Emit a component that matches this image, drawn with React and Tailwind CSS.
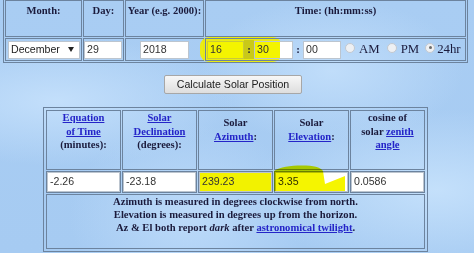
import React from "react";

const Radio = ({ checked }) => (
  <span className="relative inline-block w-[10px] h-[10px] rounded-full border border-[#c3c8cf] bg-[#eef0f3] shrink-0">
    {checked && (
      <span className="absolute left-[2.5px] top-[2.5px] w-[3px] h-[3px] rounded-full bg-[#6b6b6b]" />
    )}
  </span>
);

const Box = ({ className = "", children }) => (
  <div
    className={
      "h-[18px] border border-[#bcc5cf] flex items-center pl-[2px] font-['Liberation_Sans',Arial,sans-serif] text-[10.6px] text-[#333] " +
      className
    }
  >
    {children}
  </div>
);

const Link = ({ children }) => (
  <span className="text-[#2424c8] underline">{children}</span>
);

export default function App() {
  const hdr =
    "border border-[#6c839e] text-center font-bold text-[10.6px] leading-[13px] text-[#1b1b3c]";
  const hdr2 =
    "border border-[#6c839e] text-center font-bold text-[10.6px] leading-[13.5px] text-[#1b1b3c]";
  return (
    <div className="relative w-[474px] h-[253px] overflow-hidden font-['Liberation_Serif',serif] bg-[radial-gradient(ellipse_at_12%_40%,#c3dffb,transparent_30%),radial-gradient(ellipse_at_70%_28%,#c0ddfa,transparent_28%),radial-gradient(ellipse_at_92%_75%,#c4e0fb,transparent_30%),radial-gradient(ellipse_at_40%_85%,#bcdaf9,transparent_30%),linear-gradient(#a9cdf3,#a6cbf2)]">
      {/* Highlighter behind the time inputs */}
      <div className="absolute left-[200px] top-[37px] w-[82px] h-[25px] rounded-[9px] bg-[#eeee06] opacity-95" />

      {/* Top table */}
      <div className="ml-[3px] mt-[-2px] w-[465px] border border-[#6c839e] p-[1px] grid grid-cols-[77px_41px_79px_261px] grid-rows-[37px_23px] gap-[1px]">
        <div className={hdr + " pt-[3px]"}>Month:</div>
        <div className={hdr + " pt-[3px]"}>Day:</div>
        <div className={hdr + " pt-[3px]"}>Year (e.g. 2000):</div>
        <div className={hdr + " pt-[3px]"}>Time: (hh:mm:ss)</div>

        <div className="border border-[#6c839e] flex items-center pl-[2px]">
          <div className="w-[72px] h-[18px] bg-white border border-[#bcc5cf] flex items-center justify-between pl-[2px] pr-[5px] font-['Liberation_Sans',Arial,sans-serif] text-[10.6px] text-[#222]">
            <span>December</span>
            <svg width="6" height="5" viewBox="0 0 6 5">
              <path d="M0 0 L6 0 L3 5 Z" fill="#222" />
            </svg>
          </div>
        </div>
        <div className="border border-[#6c839e] flex items-center">
          <Box className="w-[38px] bg-white">29</Box>
        </div>
        <div className="border border-[#6c839e] flex items-center justify-center">
          <Box className="w-[49px] bg-white">2018</Box>
        </div>
        <div className="relative border border-[#6c839e] flex items-center pl-[1px] text-[12.8px] text-[#1b1b3c]">
          <Box className="relative w-[37px] bg-[#f4f400] border-[#c9c93a]">16</Box>
          <span className="relative w-[10px] h-[19px] flex items-center justify-center font-bold text-[11px] bg-[#c9c918]">:</span>
          <Box className="relative w-[39px] bg-[linear-gradient(to_right,#f4f400_25px,#ffffff_25px)]">30</Box>
          <span className="w-[10px] text-center font-bold text-[11px]">:</span>
          <Box className="w-[38px] bg-white">00</Box>
          <span className="ml-[4px]"><Radio /></span>
          <span className="ml-[4px]">AM</span>
          <span className="ml-[7px]"><Radio /></span>
          <span className="ml-[4px]">PM</span>
          <span className="ml-[6px]"><Radio checked /></span>
          <span className="ml-[2px]">24hr</span>
        </div>
      </div>

      {/* Button */}
      <div className="mt-[12px] ml-[164px] w-[138px] h-[19px] border border-[#a7a7a7] rounded-[2px] bg-[linear-gradient(#f7f7f7,#dedede)] flex items-center justify-center font-['Liberation_Sans',Arial,sans-serif] text-[10.6px] text-[#222]">
        Calculate Solar Position
      </div>

      {/* Bottom table */}
      <div className="mt-[13px] ml-[43px] w-[385px] border border-[#6c839e] p-[2px] grid grid-cols-[repeat(5,75px)] grid-rows-[60px_22px_55px] gap-[1px]">
        <div className={hdr2}>
          <Link>Equation </Link>
          <br />
          <Link>of Time</Link>
          <br />
          (minutes):
        </div>
        <div className={hdr2}>
          <Link>Solar</Link>
          <br />
          <Link>Declination</Link>
          <br />
          (degrees):
        </div>
        <div className={hdr2 + " pt-[5px]"}>
          Solar
          <br />
          <Link>Azimuth</Link>:
        </div>
        <div className={hdr2 + " pt-[5px]"}>
          Solar
          <br />
          <Link>Elevation</Link>:
        </div>
        <div className={hdr2}>
          cosine of
          <br />
          solar <Link>zenith</Link>
          <br />
          <Link>angle</Link>
        </div>

        <div className="border border-[#6c839e]">
          <Box className="h-full bg-white">-2.26</Box>
        </div>
        <div className="border border-[#6c839e]">
          <Box className="h-full bg-white">-23.18</Box>
        </div>
        <div className="border border-[#6c839e]">
          <Box className="h-full bg-[#f2f200]">239.23</Box>
        </div>
        <div className="border border-[#6c839e]">
          <Box className="h-full bg-white">3.35</Box>
        </div>
        <div className="border border-[#6c839e]">
          <Box className="h-full bg-white">0.0586</Box>
        </div>

        <div className="col-span-5 border border-[#6c839e] text-center font-bold text-[10.6px] leading-[13px] text-[#1b1b3c]">
          Azimuth is measured in degrees clockwise from north.
          <br />
          Elevation is measured in degrees up from the horizon.
          <br />
          Az &amp; El both report <i>dark</i> after{" "}
          <Link>astronomical twilight</Link>.
        </div>
      </div>

      {/* Highlighter stroke over elevation */}
      <svg
        className="absolute left-[270px] top-[160px] mix-blend-multiply"
        width="80"
        height="35"
        viewBox="0 0 80 35"
      >
        <path
          d="M4 11 C10 7 20 5.5 32 5.5 C44 5.5 50 7 53 11 L55 24 L75 16 L75 31 L4 31 Z"
          fill="#f5f500"
        />
      </svg>
    </div>
  );
}
